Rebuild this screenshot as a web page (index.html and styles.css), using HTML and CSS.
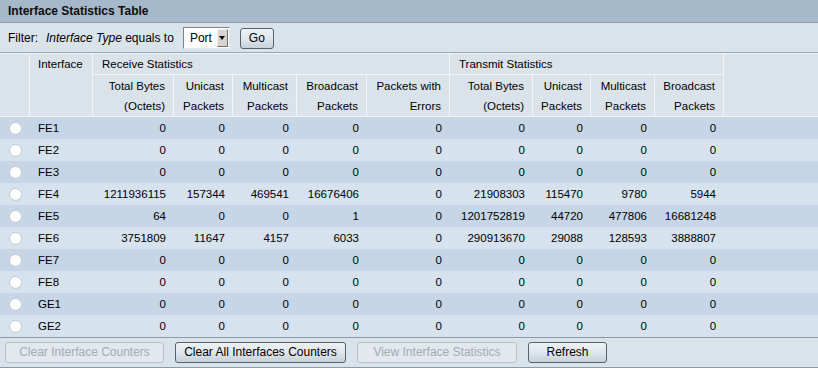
FILE: index.html
```html
<!DOCTYPE html>
<html>
<head>
<meta charset="utf-8">
<title>Interface Statistics Table</title>
<link rel="stylesheet" href="styles.css">
</head>
<body>
<div class="title">Interface Statistics Table</div>
<div class="filter">
  <span class="flabel">Filter:</span>
  <span><i>Interface Type</i> equals to</span>
  <span class="sel"><span class="sel-val">Port</span><span class="sel-btn"><span class="tri"></span></span></span>
  <button class="btn go">Go</button>
</div>
<table class="stats">
  <colgroup>
    <col class="c-radio"><col class="c-if"><col class="c-w81"><col class="c-w59"><col class="c-w64"><col class="c-w70"><col class="c-w83"><col class="c-w83"><col class="c-w58"><col class="c-w64"><col class="c-w69"><col class="c-rest">
  </colgroup>
  <thead>
    <tr class="r1">
      <th rowspan="2"></th>
      <th rowspan="2" class="left">Interface</th>
      <th colspan="5" class="left grp">Receive Statistics</th>
      <th colspan="4" class="left grp">Transmit Statistics</th>
      <th rowspan="2" class="last"></th>
    </tr>
    <tr class="r2">
      <th>Total Bytes<br>(Octets)</th>
      <th>Unicast<br>Packets</th>
      <th>Multicast<br>Packets</th>
      <th>Broadcast<br>Packets</th>
      <th>Packets with<br>Errors</th>
      <th>Total Bytes<br>(Octets)</th>
      <th>Unicast<br>Packets</th>
      <th>Multicast<br>Packets</th>
      <th>Broadcast<br>Packets</th>
    </tr>
  </thead>
  <tbody>
    <tr><td class="rad"><span class="radio"></span></td><td class="left">FE1</td><td>0</td><td>0</td><td>0</td><td>0</td><td>0</td><td>0</td><td>0</td><td>0</td><td>0</td><td></td></tr>
    <tr><td class="rad"><span class="radio"></span></td><td class="left">FE2</td><td>0</td><td>0</td><td>0</td><td>0</td><td>0</td><td>0</td><td>0</td><td>0</td><td>0</td><td></td></tr>
    <tr><td class="rad"><span class="radio"></span></td><td class="left">FE3</td><td>0</td><td>0</td><td>0</td><td>0</td><td>0</td><td>0</td><td>0</td><td>0</td><td>0</td><td></td></tr>
    <tr><td class="rad"><span class="radio"></span></td><td class="left">FE4</td><td>1211936115</td><td>157344</td><td>469541</td><td>16676406</td><td>0</td><td>21908303</td><td>115470</td><td>9780</td><td>5944</td><td></td></tr>
    <tr><td class="rad"><span class="radio"></span></td><td class="left">FE5</td><td>64</td><td>0</td><td>0</td><td>1</td><td>0</td><td>1201752819</td><td>44720</td><td>477806</td><td>16681248</td><td></td></tr>
    <tr><td class="rad"><span class="radio"></span></td><td class="left">FE6</td><td>3751809</td><td>11647</td><td>4157</td><td>6033</td><td>0</td><td>290913670</td><td>29088</td><td>128593</td><td>3888807</td><td></td></tr>
    <tr><td class="rad"><span class="radio"></span></td><td class="left">FE7</td><td>0</td><td>0</td><td>0</td><td>0</td><td>0</td><td>0</td><td>0</td><td>0</td><td>0</td><td></td></tr>
    <tr><td class="rad"><span class="radio"></span></td><td class="left">FE8</td><td>0</td><td>0</td><td>0</td><td>0</td><td>0</td><td>0</td><td>0</td><td>0</td><td>0</td><td></td></tr>
    <tr><td class="rad"><span class="radio"></span></td><td class="left">GE1</td><td>0</td><td>0</td><td>0</td><td>0</td><td>0</td><td>0</td><td>0</td><td>0</td><td>0</td><td></td></tr>
    <tr><td class="rad"><span class="radio"></span></td><td class="left">GE2</td><td>0</td><td>0</td><td>0</td><td>0</td><td>0</td><td>0</td><td>0</td><td>0</td><td>0</td><td></td></tr>
  </tbody>
</table>
<div class="actions">
  <button class="btn dis b1">Clear Interface Counters</button>
  <button class="btn b2">Clear All Interfaces Counters</button>
  <button class="btn dis b3">View Interface Statistics</button>
  <button class="btn b4">Refresh</button>
</div>
</body>
</html>
```
FILE: styles.css
```css
html, body {
  margin: 0;
  padding: 0;
}
body {
  width: 818px;
  height: 368px;
  overflow: hidden;
  font-family: "Liberation Sans", Arial, sans-serif;
  color: #000;
  background: #dbe3ea;
}
.title {
  height: 22px;
  line-height: 22px;
  background: #a6b9cb;
  border-bottom: 1px solid #8c9dad;
  font-weight: bold;
  font-size: 12px;
  padding-left: 8px;
  color: #0d0d0d;
}
.filter {
  display: flex;
  align-items: center;
  padding: 1px 8px 0 8px;
  box-sizing: border-box;
  font-size: 12px;
  background: #dbe3ea;
  border-bottom: 1px solid #97a6b4;
  height: 30px;
}
.flabel {
  margin-right: 8px;
}
.sel {
  display: inline-flex;
  box-sizing: border-box;
  width: 47px;
  height: 22px;
  margin-left: 9px;
  background: #fff;
  border: 1px solid;
  border-color: #7c8690 #e4e9ee #e4e9ee #7c8690;
  padding: 1px;
}
.sel-val {
  flex: 1;
  padding-left: 5px;
  line-height: 18px;
  font-size: 12px;
}
.sel-btn {
  width: 11px;
  background: #d8d5d0;
  border: 1px solid;
  border-color: #f2f2f2 #6f6f6f #6f6f6f #f2f2f2;
  box-sizing: border-box;
  display: flex;
  align-items: center;
  justify-content: center;
}
.tri {
  width: 0;
  height: 0;
  border-left: 3px solid transparent;
  border-right: 3px solid transparent;
  border-top: 4px solid #000;
}
.btn {
  font-family: "Liberation Sans", Arial, sans-serif;
  font-size: 12px;
  color: #000;
  height: 21px;
  box-sizing: border-box;
  border: 1px solid #57626c;
  border-radius: 3px;
  background: linear-gradient(#eef2f6, #dfe6ec 50%, #c6d1db);
  padding: 0;
  line-height: 19px;
  margin: 0;
  white-space: nowrap;
  text-align: center;
}
.btn.go {
  width: 34px;
  margin-left: 10px;
}
.btn.dis {
  color: #a3abb3;
  border-color: #b8c2cb;
  background: #e2e8ed;
}
.b1 { width: 159px; }
.b2 { width: 171px; }
.b3 { width: 160px; }
.b4 { width: 79px; }

.stats {
  width: 818px;
  border-collapse: separate;
  border-spacing: 0;
  table-layout: fixed;
  font-size: 11.5px;
}
.c-radio { width: 30px; }
.c-if { width: 63px; }
.c-w81 { width: 81px; }
.c-w59 { width: 59px; }
.c-w64 { width: 64px; }
.c-w70 { width: 70px; }
.c-w83 { width: 83px; }
.c-w58 { width: 58px; }
.c-w69 { width: 69px; }
.c-rest { width: 94px; }

.stats th, .stats td {
  box-sizing: border-box;
  padding: 0 8px 0 0;
  text-align: right;
  white-space: nowrap;
  overflow: hidden;
}
.stats th {
  font-weight: normal;
  background: #dbe3ea;
  border-right: 1px solid #f2f5f8;
  border-bottom: 1px solid #f2f5f8;
  line-height: 20px;
  vertical-align: top;
}
.stats tr.r1 th {
  border-top: 1px solid #f2f5f8;
  height: 22px;
}
.stats tr.r2 th {
  height: 42px;
  padding-top: 1px;
}
.stats th.last {
  border-right: none;
}
.stats th.left, .stats td.left {
  text-align: left;
  padding-left: 8px;
}
.stats th.grp {
  padding-left: 9px;
}
.stats td {
  height: 22px;
  line-height: 22px;
  background: #c6d6e6;
}
.stats tbody tr:nth-child(even) td {
  background: #d6e2ee;
}
.stats tbody tr:last-child td {
  border-bottom: 1px solid #8c9aa7;
  height: 23px;
}
.stats td.rad {
  padding: 0;
  text-align: left;
}
.radio {
  display: block;
  width: 13px;
  height: 13px;
  box-sizing: border-box;
  border-radius: 50%;
  border: 1px solid #c3ccd5;
  background: radial-gradient(circle at 50% 40%, #fff 55%, #eef1f4);
  margin-left: 9px;
}
.actions {
  display: flex;
  gap: 11px;
  align-items: flex-start;
  height: 30px;
  box-sizing: border-box;
  padding: 4px 5px 0 5px;
  border-bottom: 1px solid #8c9aa7;
  background: #dbe3ea;
}
```
